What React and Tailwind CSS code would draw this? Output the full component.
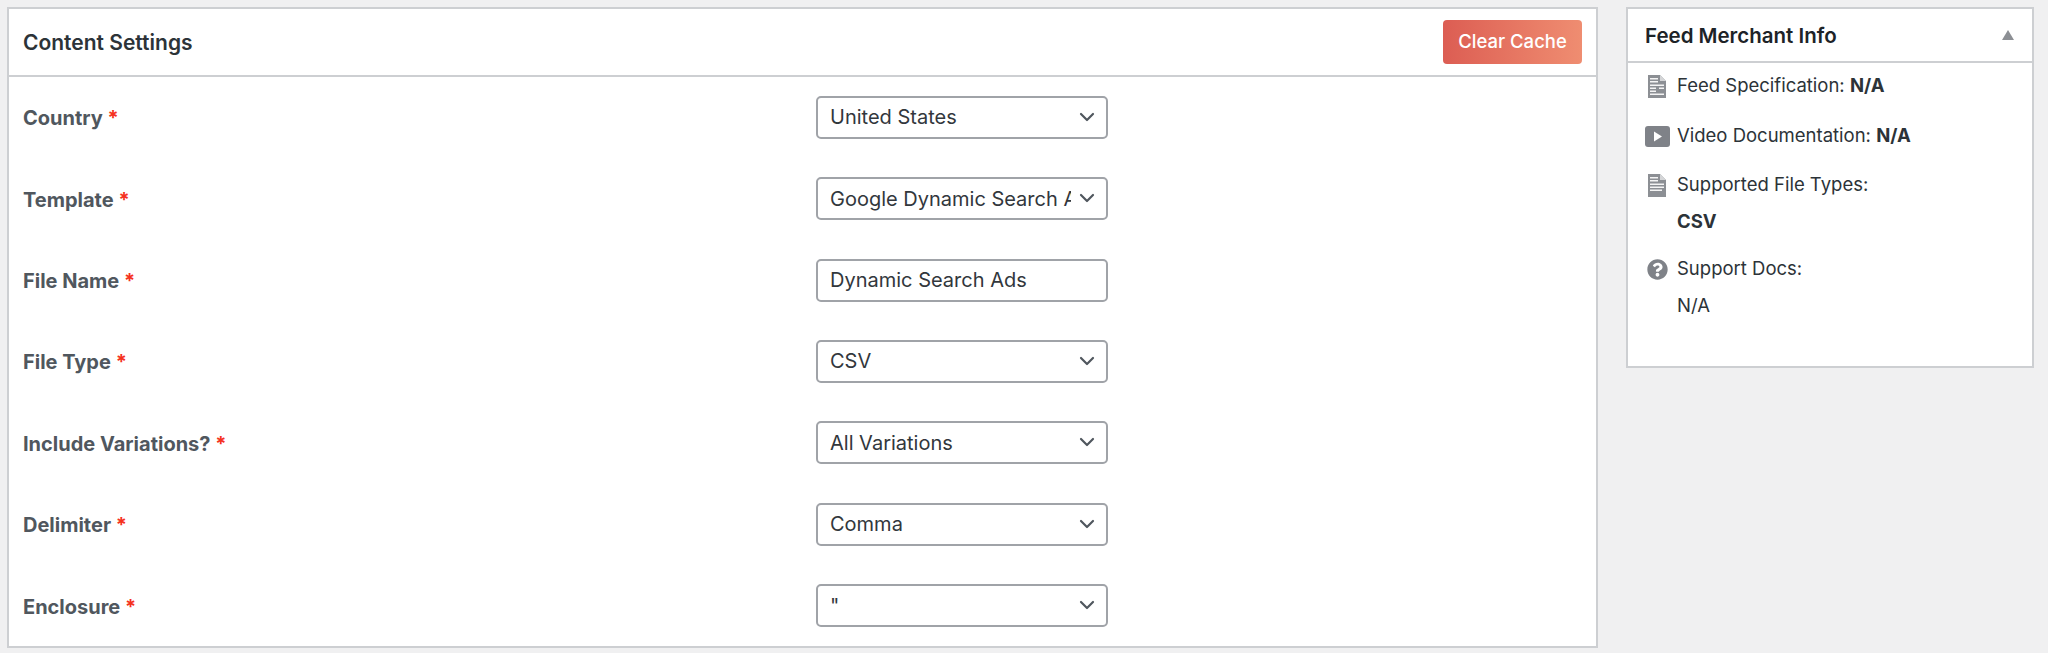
import { ChevronDown } from 'lucide-react'
import { FaQuestionCircle } from 'react-icons/fa'

const fields = [
  { label: 'Country', value: 'United States', options: ['United States'] },
  { label: 'Template', value: 'Google Dynamic Search Ads', options: ['Google Dynamic Search Ads'] },
  { label: 'File Name', value: 'Dynamic Search Ads', input: true },
  { label: 'File Type', value: 'CSV', options: ['CSV'] },
  { label: 'Include Variations?', value: 'All Variations', options: ['All Variations'] },
  { label: 'Delimiter', value: 'Comma', options: ['Comma'] },
  { label: 'Enclosure', value: '"', options: ['"'] },
]

function Field({ field }) {
  return (
    <div className="flex h-[81.4px] items-center pl-[14px]">
      <label className="relative top-[1px] w-[793px] text-[20px] font-bold text-[#50575e]">
        {field.label} <span className="text-[#f5321e]">*</span>
      </label>
      {field.input ? (
        <input
          readOnly
          value={field.value}
          className="h-[43px] w-[292px] rounded-[5px] border-2 border-[#a0a3a8] bg-white px-[12px] text-[20px] text-[#32373c] outline-none"
        />
      ) : (
        <div className="relative w-[292px]">
          <select
            value={field.value}
            onChange={() => {}}
            className="h-[43px] w-full appearance-none rounded-[5px] border-2 border-[#a0a3a8] bg-white pl-[12px] pr-[35px] text-[20px] text-[#32373c] outline-none"
          >
            {field.options.map((o) => (
              <option key={o}>{o}</option>
            ))}
          </select>
          <ChevronDown size={24} strokeWidth={2.2} className="pointer-events-none absolute right-[9px] top-[9px] text-[#50575e]" />
        </div>
      )}
    </div>
  )
}

function DocIcon({ table }) {
  return (
    <svg width="18" height="23" viewBox="0 0 18 23" className="shrink-0">
      <path d="M0 0h12l6 6v17H0z" fill="#8c8f94" />
      <path d="M12 0l6 6h-6z" fill="#d4d5d7" />
      {table ? (
        <path d="M2 3h8v1.4H2zM2 6h8v1.4H2zM2 9.5h14v1.4H2zM2 12.5h6v1.4H2zM11 12.5h5v1.4h-5zM2 15.5h6v1.4H2zM2 18.5h14v1.4H2z" fill="#f4f4f4" />
      ) : (
        <path d="M2 3h8v1.4H2zM2 6h8v1.4H2zM2 9.5h14v1.4H2zM2 12.5h14v1.4H2zM2 15.5h12v1.4H2z" fill="#f4f4f4" />
      )}
    </svg>
  )
}

function VideoIcon() {
  return (
    <svg width="25" height="21" viewBox="0 0 25 21" className="shrink-0">
      <rect width="25" height="21" rx="3" fill="#7f8288" />
      <path d="M9 5.5l8 5-8 5z" fill="#fff" />
    </svg>
  )
}

function InfoRow({ icon, children, sub, className }) {
  return (
    <div className={className}>
      <div className="flex h-6 items-center">
        <div className="flex w-[34px] shrink-0 justify-center pr-[6px]">{icon}</div>
        <span>{children}</span>
      </div>
      {sub && <div className="mt-3 h-6 pl-[34px] leading-6">{sub}</div>}
    </div>
  )
}

export default function App() {
  return (
    <div className="min-h-[653px] bg-[#f0f0f1] font-['Inter',sans-serif]">
      <div className="flex items-start gap-[28px] pl-[7px] pt-[7px]">
        <div className="w-[1591px] border-2 border-[#cdcfd2] bg-white">
          <div className="flex h-[67.6px] items-center justify-between border-b-2 border-[#cdcfd2] px-[14px]">
            <h2 className="relative top-[1px] text-[21px] font-semibold text-[#2c3338]">Content Settings</h2>
            <button className="h-[44px] w-[139px] rounded-[4px] bg-gradient-to-r from-[#dc5d53] to-[#ef8d71] text-[18.5px] font-medium text-white">
              Clear Cache
            </button>
          </div>
          <div>
            {fields.map((f) => (
              <Field key={f.label} field={f} />
            ))}
          </div>
        </div>

        <div className="h-[361px] w-[408px] border-2 border-[#cdcfd2] bg-white text-[18.5px] text-[#2c3338]">
          <div className="flex h-[54px] items-center justify-between border-b-2 border-[#cdcfd2] pl-[17px] pr-[18px]">
            <h2 className="relative top-[1px] text-[20.5px] font-semibold text-[#1d2327]">Feed Merchant Info</h2>
            <span className="h-0 w-0 border-x-[6px] border-b-[10px] border-x-transparent border-b-[#8c8f94]" />
          </div>
          <div className="pl-[15px] pt-[11px]">
            <InfoRow icon={<DocIcon table />}>
              Feed Specification: <b className="font-bold">N/A</b>
            </InfoRow>
            <InfoRow className="mt-[26px]" icon={<VideoIcon />}>
              Video Documentation: <b className="font-bold">N/A</b>
            </InfoRow>
            <InfoRow className="mt-[25px]" icon={<DocIcon />} sub={<b className="font-bold">CSV</b>}>
              Supported File Types:
            </InfoRow>
            <InfoRow className="mt-[24px]" icon={<FaQuestionCircle size={21} className="text-[#7f8288]" />} sub="N/A">
              Support Docs:
            </InfoRow>
          </div>
        </div>
      </div>
    </div>
  )
}
